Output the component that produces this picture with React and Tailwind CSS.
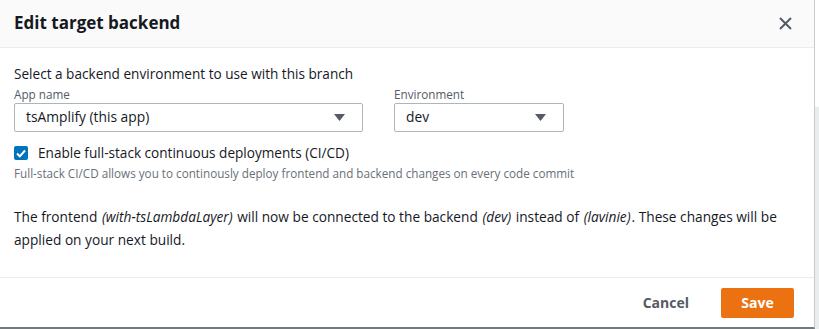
import { useState } from "react";

function Caret() {
  return (
    <svg width="11" height="8" viewBox="0 0 11 8" className="shrink-0">
      <path d="M0 0 L11 0 L5.5 7 Z" fill="#545b64" />
    </svg>
  );
}

function Select({ value, width }) {
  return (
    <div
      className={`${width} h-[29px] flex items-center justify-between pl-[11px] pr-[17px] border border-[#aab7b8] rounded-[2px] bg-white`}
    >
      <span className="text-[13.8px] text-[#16191f]">{value}</span>
      <Caret />
    </div>
  );
}

export default function App() {
  const [checked, setChecked] = useState(true);

  return (
    <div
      className="w-[819px] h-[329px] flex bg-white overflow-hidden"
      style={{ fontFamily: '"Open Sans", "Noto Sans", sans-serif' }}
    >
      <div className="w-[815px] h-[329px] shrink-0 flex flex-col border-r border-[#c6cccc] border-b-2 border-b-[#6f7b7c] bg-white">
        {/* header */}
        <div className="h-[48px] shrink-0 flex items-center justify-between pl-[14px] pr-[22px] bg-[#fafafa] border-b border-[#eaeded]">
          <h2 className="text-[17px] font-bold text-[#16191f] leading-none -mt-[3px]">
            Edit target backend
          </h2>
          <svg width="13" height="13" viewBox="0 0 13 13" className="-mt-[1px]">
            <path d="M1 1 L12 12 M12 1 L1 12" stroke="#545b64" strokeWidth="2" />
          </svg>
        </div>

        {/* body */}
        <div className="flex-1 px-[14px] pt-[16px]">
          <p className="text-[13.6px] leading-[20px] text-[#16191f]">
            Select a backend environment to use with this branch
          </p>
          <div className="flex gap-[31px] mt-[2px]">
            <div className="flex flex-col">
              <span className="text-[11.7px] leading-[17px] text-[#545b64]">App name</span>
              <Select value="tsAmplify (this app)" width="w-[349px]" />
            </div>
            <div className="flex flex-col">
              <span className="text-[11.7px] leading-[17px] text-[#545b64]">Environment</span>
              <Select value="dev" width="w-[170px]" />
            </div>
          </div>

          <label className="flex items-center gap-[10px] mt-[11px] cursor-pointer">
            <span
              onClick={() => setChecked(!checked)}
              className="w-[14px] h-[14px] rounded-[2px] bg-[#0073bb] flex items-center justify-center"
            >
              {checked && (
                <svg width="10" height="9" viewBox="0 0 10 9">
                  <path d="M1 4.5 L3.8 7.3 L9 1.5" stroke="white" strokeWidth="2" fill="none" />
                </svg>
              )}
            </span>
            <span className="text-[13.6px] leading-[20px] text-[#16191f]">
              Enable full-stack continuous deployments (CI/CD)
            </span>
          </label>
          <p className="text-[11.7px] leading-[17px] text-[#687078] mt-[2px]">
            Full-stack CI/CD allows you to continously deploy frontend and backend changes on every code commit
          </p>

          <p className="text-[13.7px] leading-[23px] text-[#16191f] mt-[23px] whitespace-nowrap">
            The frontend <em className="px-[1px]">(with-tsLambdaLayer)</em> will now be connected to the
            backend <em className="px-[1px]">(dev)</em> instead of <em className="px-[1px]">(lavinie)</em>.
            These changes will be
            <br />
            applied on your next build.
          </p>
        </div>

        {/* footer */}
        <div className="h-[50px] shrink-0 flex items-center justify-end gap-[32px] pr-[20px] border-t border-[#eaeded]">
          <button className="text-[14px] font-bold text-[#545b64]">Cancel</button>
          <button className="w-[73px] h-[30px] rounded-[2px] bg-[#ec7211] text-white text-[14px] font-bold">
            Save
          </button>
        </div>
      </div>
      <div className="flex-1 flex flex-col">
        <div className="h-[107px] bg-white" />
        <div className="flex-1 bg-[#eaeded]" />
      </div>
    </div>
  );
}
